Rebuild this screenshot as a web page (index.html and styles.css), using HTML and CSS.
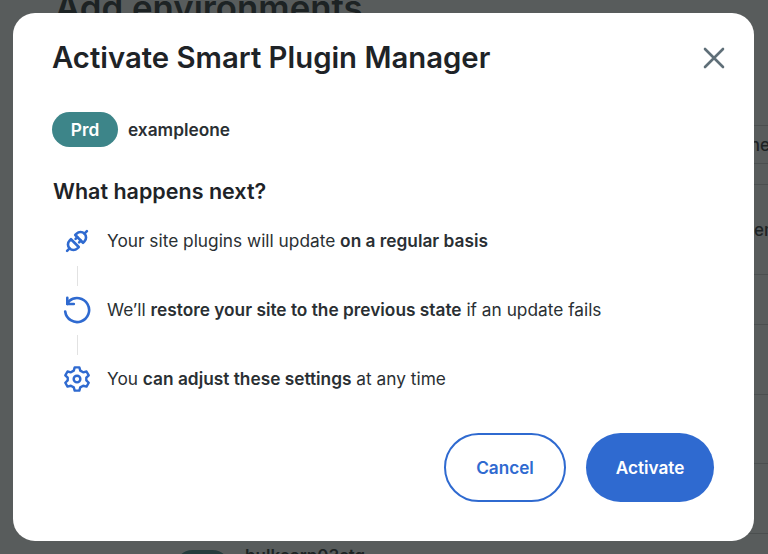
FILE: index.html
```html
<!DOCTYPE html>
<html lang="en">
<head>
  <meta charset="UTF-8">
  <meta name="viewport" content="width=device-width, initial-scale=1.0">
  <title>Activate Smart Plugin Manager</title>
  <link rel="stylesheet" href="styles.css">
</head>
<body>
  <div class="page">
    <h2 class="page-title">Add environments</h2>
    <div class="table">
      <div class="table-row row-38"><span class="cell">Timezone</span></div>
      <div class="table-row row-21"></div>
      <div class="table-row row-90"><span class="cell cell-cut">System</span></div>
      <div class="table-row row-50"></div>
      <div class="table-row row-70"></div>
      <div class="table-row row-69"></div>
      <div class="table-row row-70"></div>
      <div class="table-row row-last">
        <span class="page-pill"></span>
        <span class="page-site">bulksorp03stg</span>
      </div>
    </div>
  </div>

  <div class="overlay"></div>

  <div class="modal">
    <div class="modal-header">
      <h1 class="modal-title">Activate Smart Plugin Manager</h1>
      <button class="close" aria-label="Close">
        <svg width="24" height="24" viewBox="0 0 24 24" fill="none" stroke="#5f6f78" stroke-width="2.6" stroke-linecap="round">
          <path d="M3 3 L21 21 M21 3 L3 21"/>
        </svg>
      </button>
    </div>

    <div class="site">
      <span class="badge">Prd</span>
      <span class="site-name">exampleone</span>
    </div>

    <h2 class="next-title">What happens next?</h2>

    <div class="steps">
      <div class="step">
        <svg class="step-icon" width="28" height="28" viewBox="0 0 28 28" fill="none" stroke="#2f6ad0" stroke-width="2.6" stroke-linecap="round" stroke-linejoin="round">
          <g transform="rotate(45 14 14)">
            <path d="M14 0 V3.5"/>
            <path d="M8.5 11 V9 A5.5 5.5 0 0 1 19.5 9 V11 Z"/>
            <path d="M11.5 11 V13.5 M16.5 11 V13.5"/>
            <path d="M8.5 17 V19 A5.5 5.5 0 0 0 19.5 19 V17 Z"/>
            <path d="M14 24.5 V28"/>
          </g>
        </svg>
        <p>Your site plugins will update <b>on a regular basis</b></p>
      </div>
      <div class="connector"></div>
      <div class="step">
        <svg class="step-icon" width="28" height="28" viewBox="0 0 28 28" fill="none" stroke="#2f6ad0" stroke-width="2.6" stroke-linecap="round" stroke-linejoin="round">
          <path d="M2.2 15.5 A12 12 0 1 0 6.2 5 L4.3 8"/>
          <path d="M4.3 1.8 V8 H10.8"/>
        </svg>
        <p>We’ll <b>restore your site to the previous state</b> if an update fails</p>
      </div>
      <div class="connector"></div>
      <div class="step">
        <svg class="step-icon" width="28" height="28" viewBox="0 0 28 28" fill="none" stroke="#2f6ad0" stroke-width="2.6" stroke-linecap="round" stroke-linejoin="round">
          <g transform="translate(1 1) scale(0.93)">
            <path d="M11.5 1.5 H16.5 L17.5 5 L20.6 6.8 L24.2 5.9 L26.6 10 L24 12.6 V15.4 L26.6 18 L24.2 22.1 L20.6 21.2 L17.5 23 L16.5 26.5 H11.5 L10.5 23 L7.4 21.2 L3.8 22.1 L1.4 18 L4 15.4 V12.6 L1.4 10 L3.8 5.9 L7.4 6.8 L10.5 5 Z"/>
            <circle cx="14" cy="14" r="3.6"/>
          </g>
        </svg>
        <p>You <b>can adjust these settings</b> at any time</p>
      </div>
    </div>

    <div class="actions">
      <button class="btn btn-outline">Cancel</button>
      <button class="btn btn-primary">Activate</button>
    </div>
  </div>
</body>
</html>
```

FILE: styles.css
```css
* {
  margin: 0;
  padding: 0;
  box-sizing: border-box;
  font-family: 'Inter', 'Liberation Sans', sans-serif;
}

html, body {
  height: 100%;
  overflow: hidden;
}

body {
  background: #fff;
  color: #1e2327;
}

.page {
  height: 554px;
  overflow: hidden;
}

.page-title {
  font-size: 34.8px;
  font-weight: 600;
  line-height: 44px;
  margin: -15px 0 0 55px;
}

.table {
  margin-top: 96px;
  padding-left: 57px;
}

.table-row {
  display: flex;
  align-items: center;
  justify-content: flex-end;
  border-top: 1px solid #ccc;
}

.cell {
  font-size: 17px;
  font-weight: 500;
  white-space: nowrap;
  margin-right: -2px;
}

.cell-cut {
  margin-right: -11px;
}

.row-38 { height: 38px; }
.row-21 { height: 21px; }
.row-90 { height: 90px; }
.row-50 { height: 50px; }
.row-70 { height: 70px; }
.row-69 { height: 69px; }

.row-last {
  height: 40px;
  align-items: flex-start;
  justify-content: flex-start;
  padding-left: 118px;
  gap: 15px;
}

.page-pill {
  width: 55px;
  height: 35px;
  margin-top: 16px;
  border-radius: 18px;
  background: #3d8589;
}

.page-site {
  font-size: 17px;
  font-weight: 600;
  line-height: 24px;
  margin-top: 10px;
}

.overlay {
  position: fixed;
  inset: 0;
  background: rgba(30, 35, 35, 0.74);
}

.modal {
  position: fixed;
  left: 13px;
  top: 13px;
  width: 741px;
  height: 528px;
  background: #fff;
  border-radius: 22px;
  padding: 26px 40px 0 39px;
  display: flex;
  flex-direction: column;
}

.modal-header {
  display: flex;
  align-items: center;
  justify-content: space-between;
  height: 38px;
}

.modal-title {
  font-size: 29.3px;
  font-weight: 600;
  line-height: 38px;
  color: #1e2327;
}

.close {
  border: none;
  background: none;
  width: 24px;
  height: 24px;
  margin-right: -12px;
  cursor: pointer;
}

.site {
  display: flex;
  align-items: center;
  gap: 10px;
  margin-top: 35px;
}

.badge {
  width: 66px;
  height: 35px;
  border-radius: 18px;
  background: #3d8589;
  color: #fff;
  font-size: 17.3px;
  font-weight: 600;
  display: flex;
  align-items: center;
  justify-content: center;
}

.site-name {
  font-size: 17.3px;
  font-weight: 600;
  color: #2a2f33;
}

.next-title {
  font-size: 21.5px;
  font-weight: 600;
  line-height: 28px;
  margin: 30px 0 0 1px;
}

.steps {
  margin-top: 19px;
  padding-left: 11px;
}

.step {
  display: flex;
  align-items: center;
  gap: 16px;
  height: 34px;
}

.step p {
  font-size: 17.3px;
  line-height: 24px;
  color: #2a2f33;
}

.step b {
  font-weight: 600;
}

.connector {
  width: 1px;
  height: 20px;
  background: #e2e2e2;
  margin: 8px 0 7px 14px;
}

.actions {
  display: flex;
  justify-content: flex-end;
  gap: 20px;
  margin-top: 37px;
}

.btn {
  height: 69px;
  border-radius: 35px;
  font-size: 17.2px;
  font-weight: 600;
  cursor: pointer;
}

.btn-outline {
  width: 122px;
  background: #fff;
  border: 2px solid #2f6ad0;
  color: #2f6ad0;
}

.btn-primary {
  width: 128px;
  background: #2f6ad0;
  border: none;
  color: #fff;
}
```
